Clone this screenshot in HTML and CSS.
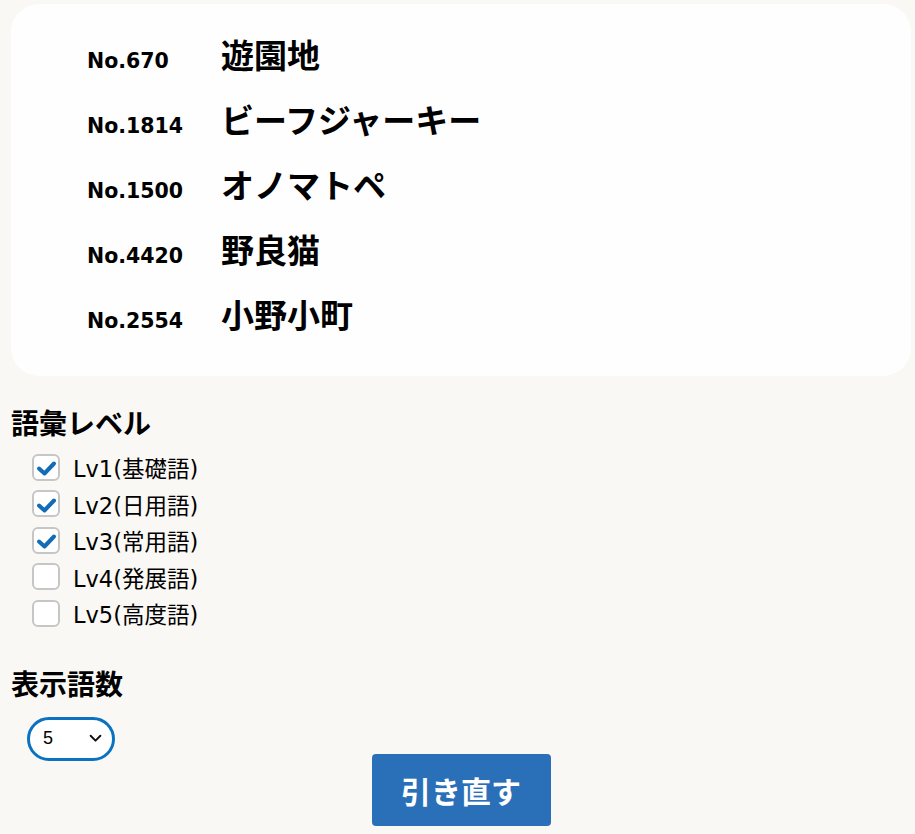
FILE: index.html
```html
<!DOCTYPE html>
<html lang="ja">
<head>
<meta charset="utf-8">
<title>語彙</title>
<link rel="stylesheet" href="styles.css">
</head>
<body>
<div class="page">
  <div class="card">
    <ul class="words">
      <li><span class="no">No.670</span><span class="word">遊園地</span></li>
      <li><span class="no">No.1814</span><span class="word">ビーフジャーキー</span></li>
      <li><span class="no">No.1500</span><span class="word">オノマトペ</span></li>
      <li><span class="no">No.4420</span><span class="word">野良猫</span></li>
      <li><span class="no">No.2554</span><span class="word">小野小町</span></li>
    </ul>
  </div>

  <section class="levels">
    <h2 class="heading">語彙レベル</h2>
    <div class="checks">
      <label class="check"><span class="box on"><svg viewBox="0 0 28 27" width="28" height="27"><path d="M7 15.5 L12.5 20.5 L22 10.5" fill="none" stroke="#136cb5" stroke-width="4" stroke-linecap="round" stroke-linejoin="round"/></svg></span>Lv1(基礎語)</label>
      <label class="check"><span class="box on"><svg viewBox="0 0 28 27" width="28" height="27"><path d="M7 15.5 L12.5 20.5 L22 10.5" fill="none" stroke="#136cb5" stroke-width="4" stroke-linecap="round" stroke-linejoin="round"/></svg></span>Lv2(日用語)</label>
      <label class="check"><span class="box on"><svg viewBox="0 0 28 27" width="28" height="27"><path d="M7 15.5 L12.5 20.5 L22 10.5" fill="none" stroke="#136cb5" stroke-width="4" stroke-linecap="round" stroke-linejoin="round"/></svg></span>Lv3(常用語)</label>
      <label class="check"><span class="box"></span>Lv4(発展語)</label>
      <label class="check"><span class="box"></span>Lv5(高度語)</label>
    </div>
  </section>

  <section class="count">
    <h2 class="heading">表示語数</h2>
    <div class="select"><span class="val">5</span><svg viewBox="0 0 12 8" width="13" height="9"><path d="M1.5 1.5 L6 6 L10.5 1.5" fill="none" stroke="#111" stroke-width="1.8" stroke-linecap="round" stroke-linejoin="round"/></svg></div>
  </section>

  <div class="actions">
    <button class="redraw" type="button">引き直す</button>
  </div>
</div>
</body>
</html>
```

FILE: styles.css
```css
html, body {
  margin: 0;
  padding: 0;
  background: #faf8f4;
}
body {
  font-family: "DejaVu Sans", "Noto Sans CJK JP", sans-serif;
  color: #000;
}
.page {
  margin: 4px 4px 0 11px;
}
.card {
  background: #fefefe;
  border-radius: 28px;
  height: 372px;
  box-sizing: border-box;
  padding: 18px 0 0 76px;
}
.words {
  list-style: none;
  margin: 0;
  padding: 0;
}
.words li {
  display: flex;
  align-items: baseline;
  height: 65px;
  line-height: 65px;
}
.no {
  width: 134px;
  font-size: 20.5px;
  font-weight: bold;
  font-family: "DejaVu Sans", sans-serif;
}
.word {
  font-family: "Noto Sans CJK JP", sans-serif;
  font-size: 33px;
  font-weight: bold;
}
.heading {
  margin: 0;
  font-family: "Noto Sans CJK JP", sans-serif;
  font-size: 28px;
  font-weight: bold;
  line-height: 32px;
}
.levels {
  margin-top: 30px;
}
.checks {
  margin-top: 11px;
  display: flex;
  flex-direction: column;
}
.check {
  display: flex;
  align-items: center;
  height: 36.5px;
  padding-left: 21px;
  font-family: "DejaVu Sans", "Noto Sans CJK JP", sans-serif;
  font-size: 22.5px;
}
.box {
  position: relative;
  width: 28px;
  height: 27px;
  box-sizing: border-box;
  border: 2.5px solid #c6c6c6;
  border-radius: 6px;
  background: #fff;
  margin-right: 13px;
}
.box svg {
  position: absolute;
  left: -2.5px;
  top: -2.5px;
}
.count {
  margin-top: 35px;
}
.select {
  margin: 18px 0 0 16px;
  width: 88px;
  height: 44px;
  box-sizing: border-box;
  border: 3px solid #0a72c1;
  border-radius: 22px;
  background: #fff;
  display: flex;
  align-items: center;
  justify-content: space-between;
  padding: 0 10px 0 13px;
}
.val {
  font-family: "Liberation Sans", sans-serif;
  font-size: 18px;
}
.actions {
  display: flex;
  justify-content: center;
  margin-top: -7px;
}
.redraw {
  width: 179px;
  height: 72px;
  border: none;
  border-radius: 4px;
  background: #2a70b8;
  color: #fff;
  font-family: "Noto Sans CJK JP", sans-serif;
  font-size: 30px;
  font-weight: bold;
  padding: 0;
}
```
